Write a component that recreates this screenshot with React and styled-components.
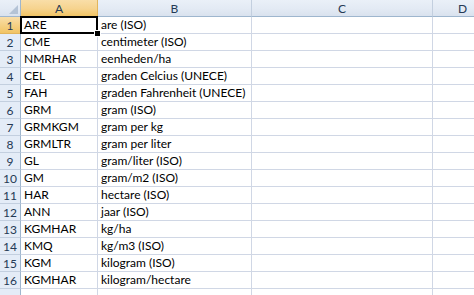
import * as React from 'react';
import styled, { createGlobalStyle, css } from 'styled-components';

const GlobalStyle = createGlobalStyle`
  html, body {
    margin: 0;
    padding: 0;
    background: #ffffff;
    overflow: hidden;
  }
`;

const rows = [
  ['ARE', 'are (ISO)'],
  ['CME', 'centimeter (ISO)'],
  ['NMRHAR', 'eenheden/ha'],
  ['CEL', 'graden Celcius (UNECE)'],
  ['FAH', 'graden Fahrenheit (UNECE)'],
  ['GRM', 'gram (ISO)'],
  ['GRMKGM', 'gram per kg'],
  ['GRMLTR', 'gram per liter'],
  ['GL', 'gram/liter (ISO)'],
  ['GM', 'gram/m2 (ISO)'],
  ['HAR', 'hectare (ISO)'],
  ['ANN', 'jaar (ISO)'],
  ['KGMHAR', 'kg/ha'],
  ['KMQ', 'kg/m3 (ISO)'],
  ['KGM', 'kilogram (ISO)'],
  ['KGMHAR', 'kilogram/hectare'],
];

const columns = ['A', 'B', 'C', 'D'];

const Sheet = styled.div`
  display: grid;
  grid-template-columns: 21px 77px 154px 181px 60px;
  grid-auto-rows: 17px;
  width: 474px;
  height: 295px;
  overflow: hidden;
  font-family: Lato, "Open Sans", sans-serif;
  font-size: 12px;
  color: #000000;
`;

const headerBase = css`
  display: flex;
  align-items: center;
  justify-content: center;
  box-sizing: border-box;
  color: #243a55;
  font-size: 12px;
  background: ${props => props.active
    ? 'linear-gradient(#f9dea8, #f6d38e 55%, #f1c464)'
    : 'linear-gradient(#eaf0f8, #e3eaf4 55%, #d9e2ee)'};
`;

const Corner = styled.div`
  ${headerBase};
  position: relative;
  border-right: 1px solid #9eb6ce;
  border-bottom: 1px solid #9eb6ce;

  &::after {
    content: '';
    position: absolute;
    right: 2px;
    bottom: 2px;
    border-style: solid;
    border-width: 0 0 9px 9px;
    border-color: transparent transparent #b4c3d6 transparent;
  }
`;

const ColHeader = styled.div`
  ${headerBase};
  border-right: 1px solid ${props => props.active ? '#e2b55c' : '#c3cfdf'};
  border-bottom: 1px solid ${props => props.active ? '#e2a93c' : '#9eb6ce'};
`;

const RowHeader = styled.div`
  ${headerBase};
  border-right: 1px solid ${props => props.active ? '#e2a93c' : '#9eb6ce'};
  border-bottom: 1px solid ${props => props.active ? '#e2b55c' : '#c3cfdf'};
  background: ${props => props.active
    ? 'linear-gradient(#f9dea8, #f1c464)'
    : '#e4ecf7'};
`;

const Cell = styled.div`
  position: relative;
  display: flex;
  align-items: flex-end;
  padding: 0 0 1px 3px;
  box-sizing: border-box;
  white-space: nowrap;
  border-right: 1px solid #d0d7e5;
  border-bottom: 1px solid #d0d7e5;

  ${props => props.selected && css`
    &::after {
      content: '';
      position: absolute;
      left: -1px;
      top: -1px;
      right: -1px;
      bottom: -1px;
      border: 2px solid #000000;
      z-index: 2;
    }

    &::before {
      content: '';
      position: absolute;
      right: -4px;
      bottom: -4px;
      width: 5px;
      height: 5px;
      background: #000000;
      border: 1px solid #ffffff;
      z-index: 3;
    }
  `}
`;

export default function App() {
  return (
    <>
      <GlobalStyle />
      <Sheet>
        <Corner />
        {columns.map((col, i) => (
          <ColHeader key={col} active={i === 0}>{col}</ColHeader>
        ))}
        {rows.map((row, r) => (
          <React.Fragment key={r}>
            <RowHeader active={r === 0}>{r + 1}</RowHeader>
            <Cell selected={r === 0}>{row[0]}</Cell>
            <Cell>{row[1]}</Cell>
            <Cell />
            <Cell />
          </React.Fragment>
        ))}
        <RowHeader />
        <Cell />
        <Cell />
        <Cell />
        <Cell />
      </Sheet>
    </>
  );
}
